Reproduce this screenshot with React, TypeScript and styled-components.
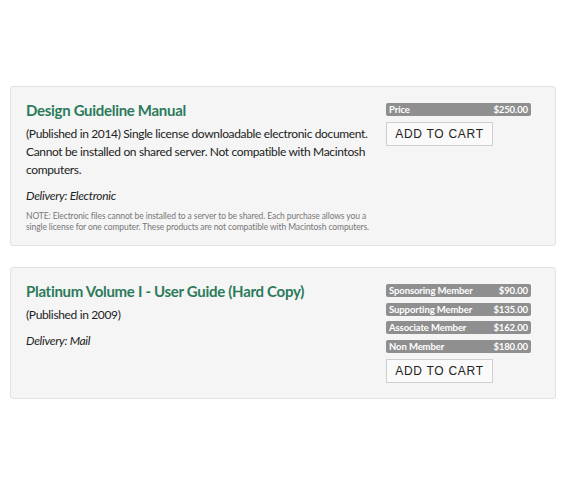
import React from 'react';
import styled, { createGlobalStyle } from 'styled-components';

const GlobalStyle = createGlobalStyle`
  body {
    margin: 0;
    background: #fff;
    font-family: Lato, 'Open Sans', sans-serif;
    color: #222;
  }
`;

const Page = styled.main`
  padding: 86px 14px 40px 10px;
  display: flex;
  flex-direction: column;
  gap: 21px;
`;

const Card = styled.section`
  display: flex;
  gap: 12px;
  padding: 13px 24px 12px 15px;
  background: #f5f5f5;
  border: 1px solid #e2e2e2;
  border-radius: 3px;
`;

const Info = styled.div`
  flex: 1;
`;

const Title = styled.h2`
  margin: 0 0 5px;
  font-size: 15px;
  line-height: 20px;
  font-weight: 700;
  letter-spacing: -0.3px;
  color: #2b7b5b;
`;

const Desc = styled.p`
  margin: 0;
  font-size: 12px;
  line-height: 18px;
  letter-spacing: -0.35px;
`;

const Delivery = styled.p`
  margin: 8px 0 0;
  font-size: 12px;
  line-height: 18px;
  letter-spacing: -0.3px;
  font-style: italic;
`;

const Note = styled.p`
  margin: 6px 0 0;
  font-size: 8.5px;
  line-height: 11px;
  letter-spacing: -0.1px;
  color: #777;
`;

const Side = styled.div`
  width: 145px;
  padding: 3px 0;
  display: flex;
  flex-direction: column;
  align-items: flex-start;
  gap: 6px;
`;

const Prices = styled.div`
  width: 100%;
  display: flex;
  flex-direction: column;
  gap: 5.5px;
`;

const Badge = styled.div`
  display: flex;
  justify-content: space-between;
  height: 13px;
  padding: 0 3px;
  background: #8f8f8f;
  border-radius: 2px;
  color: #fff;
  font-size: 9.5px;
  line-height: 13px;
  font-weight: 700;
  letter-spacing: -0.1px;
`;

const CartButton = styled.button`
  width: 107px;
  height: 24px;
  padding: 0;
  background: #fafafa;
  border: 1px solid #cfcfcf;
  color: #222;
  font-family: 'Liberation Sans', Arial, sans-serif;
  font-size: 12px;
  letter-spacing: 0.7px;
  cursor: pointer;
`;

type Price = { label: string; amount: string };

type Product = {
  title: string;
  desc: string;
  delivery: string;
  note?: string;
  prices: Price[];
};

const products: Product[] = [
  {
    title: 'Design Guideline Manual',
    desc: '(Published in 2014) Single license downloadable electronic document. Cannot be installed on shared server. Not compatible with Macintosh computers.',
    delivery: 'Delivery: Electronic',
    note: 'NOTE: Electronic files cannot be installed to a server to be shared. Each purchase allows you a single license for one computer. These products are not compatible with Macintosh computers.',
    prices: [{ label: 'Price', amount: '$250.00' }],
  },
  {
    title: 'Platinum Volume I - User Guide (Hard Copy)',
    desc: '(Published in 2009)',
    delivery: 'Delivery: Mail',
    prices: [
      { label: 'Sponsoring Member', amount: '$90.00' },
      { label: 'Supporting Member', amount: '$135.00' },
      { label: 'Associate Member', amount: '$162.00' },
      { label: 'Non Member', amount: '$180.00' },
    ],
  },
];

function App(): JSX.Element {
  return (
    <>
      <GlobalStyle />
      <Page>
        {products.map((p) => (
          <Card key={p.title}>
            <Info>
              <Title>{p.title}</Title>
              <Desc>{p.desc}</Desc>
              <Delivery>{p.delivery}</Delivery>
              {p.note && <Note>{p.note}</Note>}
            </Info>
            <Side>
              <Prices>
                {p.prices.map((pr) => (
                  <Badge key={pr.label}>
                    <span>{pr.label}</span>
                    <span>{pr.amount}</span>
                  </Badge>
                ))}
              </Prices>
              <CartButton>ADD TO CART</CartButton>
            </Side>
          </Card>
        ))}
      </Page>
    </>
  );
}

export default App;
